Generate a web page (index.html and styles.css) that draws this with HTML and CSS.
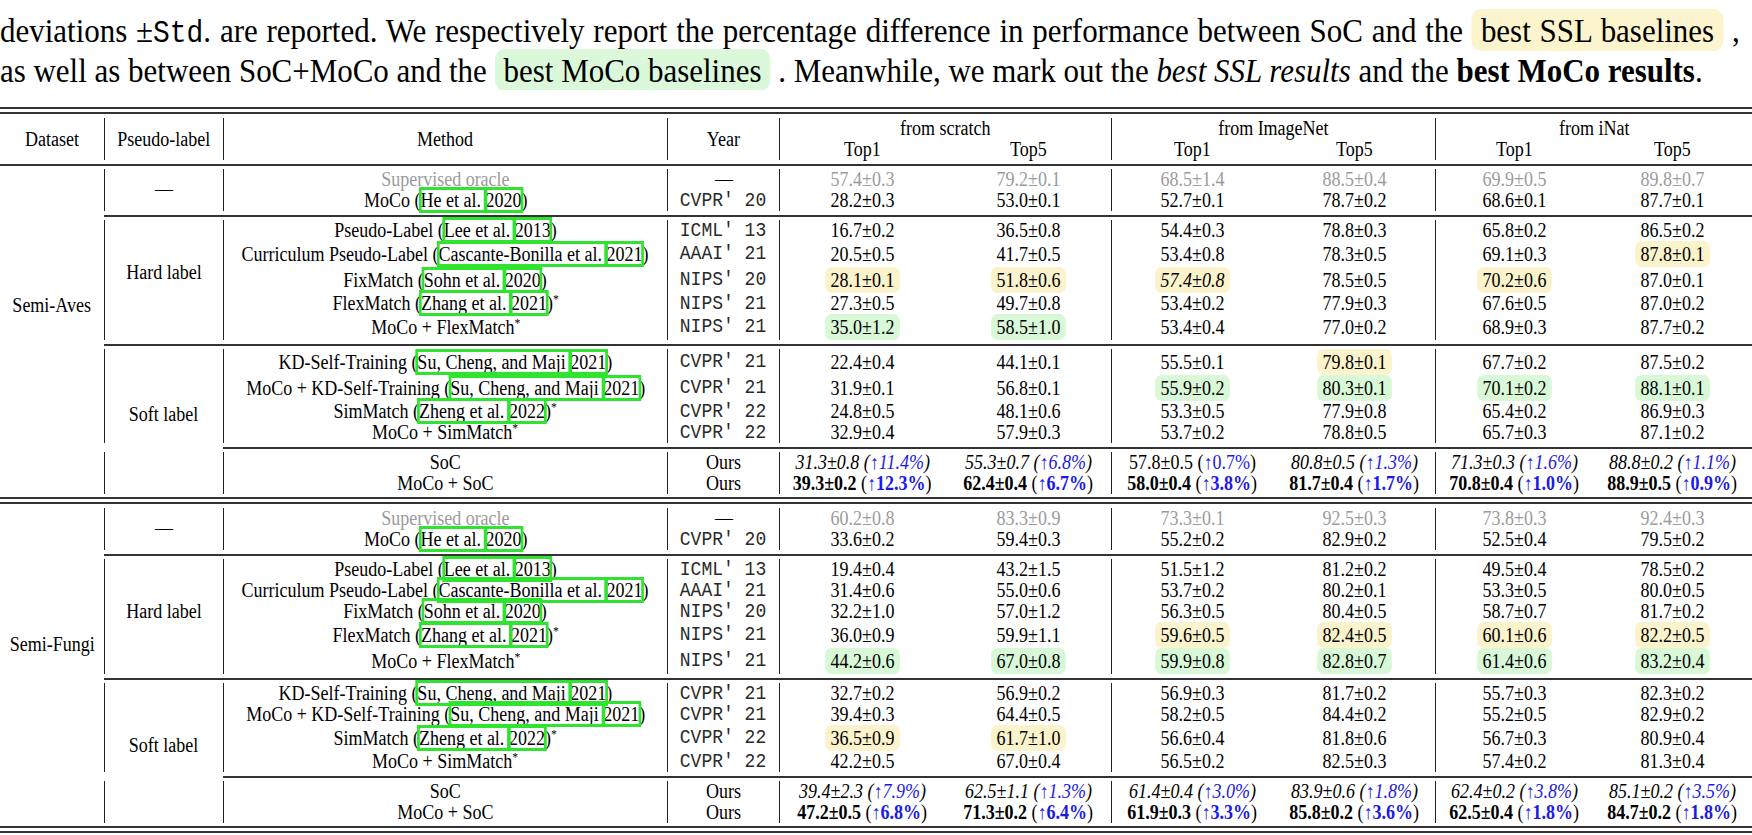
FILE: index.html
```html
<!DOCTYPE html>
<html>
<head>
<meta charset="utf-8">
<link rel="stylesheet" href="styles.css">
</head>
<body>
<div class="capwrap">
<div class="cap">
  <div class="cl j">deviations ±<span class="tt">Std</span>. are reported. We respectively report the percentage difference in performance between SoC and the <span class="cy">best SSL baselines</span> ,</div>
  <div class="cl">as well as between SoC+MoCo and the <span class="cg">best MoCo baselines</span> . Meanwhile, we mark out the <i>best SSL results</i> and the <b>best MoCo results</b>.</div>
</div>
</div>

<div class="tbl">
  <div class="drule top"></div>

  <div class="g head">
    <div class="h2 c1"><span class="t">Dataset</span></div>
    <div class="h2 c2 bl"><span class="t">Pseudo-label</span></div>
    <div class="h2 c3 bl"><span class="t">Method</span></div>
    <div class="h2 c4 bl"><span class="t">Year</span></div>
    <div class="c56 bl"><span class="t">from scratch</span></div>
    <div class="c78 bl"><span class="t">from ImageNet</span></div>
    <div class="c910 bl"><span class="t">from iNat</span></div>
    <div class="bl"><span class="t">Top1</span></div><div><span class="t">Top5</span></div>
    <div class="bl"><span class="t">Top1</span></div><div><span class="t">Top5</span></div>
    <div class="bl"><span class="t">Top1</span></div><div><span class="t">Top5</span></div>
  </div>

  <div class="hr full"></div>

  <!-- Semi-Aves -->
  <div class="g sec">
    <div class="ds"><span class="t">Semi-Aves</span></div>
    <div class="pl r-or"><span class="t">—</span></div>
    <div class="hr r1"></div>
    <div class="pl r-hard"><span class="t">Hard label</span></div>
    <div class="hr r2"></div>
    <div class="pl r-soft soft-a"><span class="t">Soft label</span></div>
    <div class="gap r3"></div>
    <div class="hr hr-m r3"></div>
    <div class="pl r-soc"></div>

    <div class="row">
      <div class="m gray"><span class="t">Supervised oracle</span></div><div class="y"><span class="t">—</span></div>
      <div class="bl gray"><span class="t">57.4±0.3</span></div><div class="gray"><span class="t">79.2±0.1</span></div>
      <div class="bl gray"><span class="t">68.5±1.4</span></div><div class="gray"><span class="t">88.5±0.4</span></div>
      <div class="bl gray"><span class="t">69.9±0.5</span></div><div class="gray"><span class="t">89.8±0.7</span></div>
    </div>
    <div class="row">
      <div class="m"><span class="t">MoCo (<span class="ct">He et al. </span><span class="ct">2020</span>)</span></div><div class="y"><span class="t yr">CVPR′ 20</span></div>
      <div class="bl"><span class="t">28.2±0.3</span></div><div><span class="t">53.0±0.1</span></div>
      <div class="bl"><span class="t">52.7±0.1</span></div><div><span class="t">78.7±0.2</span></div>
      <div class="bl"><span class="t">68.6±0.1</span></div><div><span class="t">87.7±0.1</span></div>
    </div>

    <div class="row">
      <div class="m"><span class="t">Pseudo-Label (<span class="ct">Lee et al. </span><span class="ct">2013</span>)</span></div><div class="y"><span class="t yr">ICML′ 13</span></div>
      <div class="bl"><span class="t">16.7±0.2</span></div><div><span class="t">36.5±0.8</span></div>
      <div class="bl"><span class="t">54.4±0.3</span></div><div><span class="t">78.8±0.3</span></div>
      <div class="bl"><span class="t">65.8±0.2</span></div><div><span class="t">86.5±0.2</span></div>
    </div>
    <div class="row tall">
      <div class="m"><span class="t">Curriculum Pseudo-Label (<span class="ct">Cascante-Bonilla et al. </span><span class="ct">2021</span>)</span></div><div class="y"><span class="t yr">AAAI′ 21</span></div>
      <div class="bl"><span class="t">20.5±0.5</span></div><div><span class="t">41.7±0.5</span></div>
      <div class="bl"><span class="t">53.4±0.8</span></div><div><span class="t">78.3±0.5</span></div>
      <div class="bl"><span class="t">69.1±0.3</span></div><div><span class="t"><span class="hy">87.8±0.1</span></span></div>
    </div>
    <div class="row tall">
      <div class="m"><span class="t">FixMatch (<span class="ct">Sohn et al. </span><span class="ct">2020</span>)</span></div><div class="y"><span class="t yr">NIPS′ 20</span></div>
      <div class="bl"><span class="t"><span class="hy">28.1±0.1</span></span></div><div><span class="t"><span class="hy">51.8±0.6</span></span></div>
      <div class="bl"><span class="t"><span class="hy"><i>57.4±0.8</i></span></span></div><div><span class="t">78.5±0.5</span></div>
      <div class="bl"><span class="t"><span class="hy">70.2±0.6</span></span></div><div><span class="t">87.0±0.1</span></div>
    </div>
    <div class="row">
      <div class="m"><span class="t">FlexMatch (<span class="ct">Zhang et al. </span><span class="ct">2021</span>)<sup>*</sup></span></div><div class="y"><span class="t yr">NIPS′ 21</span></div>
      <div class="bl"><span class="t">27.3±0.5</span></div><div><span class="t">49.7±0.8</span></div>
      <div class="bl"><span class="t">53.4±0.2</span></div><div><span class="t">77.9±0.3</span></div>
      <div class="bl"><span class="t">67.6±0.5</span></div><div><span class="t">87.0±0.2</span></div>
    </div>
    <div class="row tall">
      <div class="m"><span class="t">MoCo + FlexMatch<sup>*</sup></span></div><div class="y"><span class="t yr">NIPS′ 21</span></div>
      <div class="bl"><span class="t"><span class="hg">35.0±1.2</span></span></div><div><span class="t"><span class="hg">58.5±1.0</span></span></div>
      <div class="bl"><span class="t">53.4±0.4</span></div><div><span class="t">77.0±0.2</span></div>
      <div class="bl"><span class="t">68.9±0.3</span></div><div><span class="t">87.7±0.2</span></div>
    </div>

    <div class="row tall">
      <div class="m"><span class="t">KD-Self-Training (<span class="ct">Su, Cheng, and Maji </span><span class="ct">2021</span>)</span></div><div class="y"><span class="t yr">CVPR′ 21</span></div>
      <div class="bl"><span class="t">22.4±0.4</span></div><div><span class="t">44.1±0.1</span></div>
      <div class="bl"><span class="t">55.5±0.1</span></div><div><span class="t"><span class="hy">79.8±0.1</span></span></div>
      <div class="bl"><span class="t">67.7±0.2</span></div><div><span class="t">87.5±0.2</span></div>
    </div>
    <div class="row tall">
      <div class="m"><span class="t">MoCo + KD-Self-Training (<span class="ct">Su, Cheng, and Maji </span><span class="ct">2021</span>)</span></div><div class="y"><span class="t yr">CVPR′ 21</span></div>
      <div class="bl"><span class="t">31.9±0.1</span></div><div><span class="t">56.8±0.1</span></div>
      <div class="bl"><span class="t"><span class="hg">55.9±0.2</span></span></div><div><span class="t"><span class="hg">80.3±0.1</span></span></div>
      <div class="bl"><span class="t"><span class="hg">70.1±0.2</span></span></div><div><span class="t"><span class="hg">88.1±0.1</span></span></div>
    </div>
    <div class="row">
      <div class="m"><span class="t">SimMatch (<span class="ct">Zheng et al. </span><span class="ct">2022</span>)<sup>*</sup></span></div><div class="y"><span class="t yr">CVPR′ 22</span></div>
      <div class="bl"><span class="t">24.8±0.5</span></div><div><span class="t">48.1±0.6</span></div>
      <div class="bl"><span class="t">53.3±0.5</span></div><div><span class="t">77.9±0.8</span></div>
      <div class="bl"><span class="t">65.4±0.2</span></div><div><span class="t">86.9±0.3</span></div>
    </div>
    <div class="row">
      <div class="m"><span class="t">MoCo + SimMatch<sup>*</sup></span></div><div class="y"><span class="t yr">CVPR′ 22</span></div>
      <div class="bl"><span class="t">32.9±0.4</span></div><div><span class="t">57.9±0.3</span></div>
      <div class="bl"><span class="t">53.7±0.2</span></div><div><span class="t">78.8±0.5</span></div>
      <div class="bl"><span class="t">65.7±0.3</span></div><div><span class="t">87.1±0.2</span></div>
    </div>

    <div class="row">
      <div class="m"><span class="t">SoC</span></div><div class="y"><span class="t">Ours</span></div>
      <div class="bl"><span class="t"><i>31.3±0.8 (<span class="bu">↑11.4%</span>)</i></span></div>
      <div><span class="t"><i>55.3±0.7 (<span class="bu">↑6.8%</span>)</i></span></div>
      <div class="bl"><span class="t">57.8±0.5 (<span class="bu">↑0.7%</span>)</span></div>
      <div><span class="t"><i>80.8±0.5 (<span class="bu">↑1.3%</span>)</i></span></div>
      <div class="bl"><span class="t"><i>71.3±0.3 (<span class="bu">↑1.6%</span>)</i></span></div>
      <div><span class="t"><i>88.8±0.2 (<span class="bu">↑1.1%</span>)</i></span></div>
    </div>
    <div class="row">
      <div class="m"><span class="t">MoCo + SoC</span></div><div class="y"><span class="t">Ours</span></div>
      <div class="bl"><span class="t"><b>39.3±0.2</b> (<span class="bu">↑<b>12.3%</b></span>)</span></div>
      <div><span class="t"><b>62.4±0.4</b> (<span class="bu">↑<b>6.7%</b></span>)</span></div>
      <div class="bl"><span class="t"><b>58.0±0.4</b> (<span class="bu">↑<b>3.8%</b></span>)</span></div>
      <div><span class="t"><b>81.7±0.4</b> (<span class="bu">↑<b>1.7%</b></span>)</span></div>
      <div class="bl"><span class="t"><b>70.8±0.4</b> (<span class="bu">↑<b>1.0%</b></span>)</span></div>
      <div><span class="t"><b>88.9±0.5</b> (<span class="bu">↑<b>0.9%</b></span>)</span></div>
    </div>
  </div>

  <div class="drule mid"></div>

  <!-- Semi-Fungi -->
  <div class="g sec">
    <div class="ds"><span class="t">Semi-Fungi</span></div>
    <div class="pl r-or"><span class="t">—</span></div>
    <div class="hr r1"></div>
    <div class="pl r-hard"><span class="t">Hard label</span></div>
    <div class="hr r2"></div>
    <div class="pl r-soft soft-f"><span class="t">Soft label</span></div>
    <div class="gap r3"></div>
    <div class="hr hr-m r3"></div>
    <div class="pl r-soc"></div>

    <div class="row">
      <div class="m gray"><span class="t">Supervised oracle</span></div><div class="y"><span class="t">—</span></div>
      <div class="bl gray"><span class="t">60.2±0.8</span></div><div class="gray"><span class="t">83.3±0.9</span></div>
      <div class="bl gray"><span class="t">73.3±0.1</span></div><div class="gray"><span class="t">92.5±0.3</span></div>
      <div class="bl gray"><span class="t">73.8±0.3</span></div><div class="gray"><span class="t">92.4±0.3</span></div>
    </div>
    <div class="row">
      <div class="m"><span class="t">MoCo (<span class="ct">He et al. </span><span class="ct">2020</span>)</span></div><div class="y"><span class="t yr">CVPR′ 20</span></div>
      <div class="bl"><span class="t">33.6±0.2</span></div><div><span class="t">59.4±0.3</span></div>
      <div class="bl"><span class="t">55.2±0.2</span></div><div><span class="t">82.9±0.2</span></div>
      <div class="bl"><span class="t">52.5±0.4</span></div><div><span class="t">79.5±0.2</span></div>
    </div>

    <div class="row">
      <div class="m"><span class="t">Pseudo-Label (<span class="ct">Lee et al. </span><span class="ct">2013</span>)</span></div><div class="y"><span class="t yr">ICML′ 13</span></div>
      <div class="bl"><span class="t">19.4±0.4</span></div><div><span class="t">43.2±1.5</span></div>
      <div class="bl"><span class="t">51.5±1.2</span></div><div><span class="t">81.2±0.2</span></div>
      <div class="bl"><span class="t">49.5±0.4</span></div><div><span class="t">78.5±0.2</span></div>
    </div>
    <div class="row">
      <div class="m"><span class="t">Curriculum Pseudo-Label (<span class="ct">Cascante-Bonilla et al. </span><span class="ct">2021</span>)</span></div><div class="y"><span class="t yr">AAAI′ 21</span></div>
      <div class="bl"><span class="t">31.4±0.6</span></div><div><span class="t">55.0±0.6</span></div>
      <div class="bl"><span class="t">53.7±0.2</span></div><div><span class="t">80.2±0.1</span></div>
      <div class="bl"><span class="t">53.3±0.5</span></div><div><span class="t">80.0±0.5</span></div>
    </div>
    <div class="row">
      <div class="m"><span class="t">FixMatch (<span class="ct">Sohn et al. </span><span class="ct">2020</span>)</span></div><div class="y"><span class="t yr">NIPS′ 20</span></div>
      <div class="bl"><span class="t">32.2±1.0</span></div><div><span class="t">57.0±1.2</span></div>
      <div class="bl"><span class="t">56.3±0.5</span></div><div><span class="t">80.4±0.5</span></div>
      <div class="bl"><span class="t">58.7±0.7</span></div><div><span class="t">81.7±0.2</span></div>
    </div>
    <div class="row tall">
      <div class="m"><span class="t">FlexMatch (<span class="ct">Zhang et al. </span><span class="ct">2021</span>)<sup>*</sup></span></div><div class="y"><span class="t yr">NIPS′ 21</span></div>
      <div class="bl"><span class="t">36.0±0.9</span></div><div><span class="t">59.9±1.1</span></div>
      <div class="bl"><span class="t"><span class="hy">59.6±0.5</span></span></div><div><span class="t"><span class="hy">82.4±0.5</span></span></div>
      <div class="bl"><span class="t"><span class="hy">60.1±0.6</span></span></div><div><span class="t"><span class="hy">82.2±0.5</span></span></div>
    </div>
    <div class="row tall">
      <div class="m"><span class="t">MoCo + FlexMatch<sup>*</sup></span></div><div class="y"><span class="t yr">NIPS′ 21</span></div>
      <div class="bl"><span class="t"><span class="hg">44.2±0.6</span></span></div><div><span class="t"><span class="hg">67.0±0.8</span></span></div>
      <div class="bl"><span class="t"><span class="hg">59.9±0.8</span></span></div><div><span class="t"><span class="hg">82.8±0.7</span></span></div>
      <div class="bl"><span class="t"><span class="hg">61.4±0.6</span></span></div><div><span class="t"><span class="hg">83.2±0.4</span></span></div>
    </div>

    <div class="row">
      <div class="m"><span class="t">KD-Self-Training (<span class="ct">Su, Cheng, and Maji </span><span class="ct">2021</span>)</span></div><div class="y"><span class="t yr">CVPR′ 21</span></div>
      <div class="bl"><span class="t">32.7±0.2</span></div><div><span class="t">56.9±0.2</span></div>
      <div class="bl"><span class="t">56.9±0.3</span></div><div><span class="t">81.7±0.2</span></div>
      <div class="bl"><span class="t">55.7±0.3</span></div><div><span class="t">82.3±0.2</span></div>
    </div>
    <div class="row">
      <div class="m"><span class="t">MoCo + KD-Self-Training (<span class="ct">Su, Cheng, and Maji </span><span class="ct">2021</span>)</span></div><div class="y"><span class="t yr">CVPR′ 21</span></div>
      <div class="bl"><span class="t">39.4±0.3</span></div><div><span class="t">64.4±0.5</span></div>
      <div class="bl"><span class="t">58.2±0.5</span></div><div><span class="t">84.4±0.2</span></div>
      <div class="bl"><span class="t">55.2±0.5</span></div><div><span class="t">82.9±0.2</span></div>
    </div>
    <div class="row tall">
      <div class="m"><span class="t">SimMatch (<span class="ct">Zheng et al. </span><span class="ct">2022</span>)<sup>*</sup></span></div><div class="y"><span class="t yr">CVPR′ 22</span></div>
      <div class="bl"><span class="t"><span class="hy">36.5±0.9</span></span></div><div><span class="t"><span class="hy">61.7±1.0</span></span></div>
      <div class="bl"><span class="t">56.6±0.4</span></div><div><span class="t">81.8±0.6</span></div>
      <div class="bl"><span class="t">56.7±0.3</span></div><div><span class="t">80.9±0.4</span></div>
    </div>
    <div class="row">
      <div class="m"><span class="t">MoCo + SimMatch<sup>*</sup></span></div><div class="y"><span class="t yr">CVPR′ 22</span></div>
      <div class="bl"><span class="t">42.2±0.5</span></div><div><span class="t">67.0±0.4</span></div>
      <div class="bl"><span class="t">56.5±0.2</span></div><div><span class="t">82.5±0.3</span></div>
      <div class="bl"><span class="t">57.4±0.2</span></div><div><span class="t">81.3±0.4</span></div>
    </div>

    <div class="row">
      <div class="m"><span class="t">SoC</span></div><div class="y"><span class="t">Ours</span></div>
      <div class="bl"><span class="t"><i>39.4±2.3 (<span class="bu">↑7.9%</span>)</i></span></div>
      <div><span class="t"><i>62.5±1.1 (<span class="bu">↑1.3%</span>)</i></span></div>
      <div class="bl"><span class="t"><i>61.4±0.4 (<span class="bu">↑3.0%</span>)</i></span></div>
      <div><span class="t"><i>83.9±0.6 (<span class="bu">↑1.8%</span>)</i></span></div>
      <div class="bl"><span class="t"><i>62.4±0.2 (<span class="bu">↑3.8%</span>)</i></span></div>
      <div><span class="t"><i>85.1±0.2 (<span class="bu">↑3.5%</span>)</i></span></div>
    </div>
    <div class="row">
      <div class="m"><span class="t">MoCo + SoC</span></div><div class="y"><span class="t">Ours</span></div>
      <div class="bl"><span class="t"><b>47.2±0.5</b> (<span class="bu">↑<b>6.8%</b></span>)</span></div>
      <div><span class="t"><b>71.3±0.2</b> (<span class="bu">↑<b>6.4%</b></span>)</span></div>
      <div class="bl"><span class="t"><b>61.9±0.3</b> (<span class="bu">↑<b>3.3%</b></span>)</span></div>
      <div><span class="t"><b>85.8±0.2</b> (<span class="bu">↑<b>3.6%</b></span>)</span></div>
      <div class="bl"><span class="t"><b>62.5±0.4</b> (<span class="bu">↑<b>1.8%</b></span>)</span></div>
      <div><span class="t"><b>84.7±0.2</b> (<span class="bu">↑<b>1.8%</b></span>)</span></div>
    </div>
  </div>

  <div class="drule bot"></div>
</div>
</body>
</html>
```

FILE: styles.css
```css
* { box-sizing: border-box; }
html, body { margin: 0; padding: 0; background: #fff; }
body {
  width: 1752px;
  height: 835px;
  overflow: hidden;
  font-family: "Liberation Serif", "Times New Roman", serif;
  color: #000;
}

/* caption: the source is set in a slightly condensed Times, so the
   block is drawn at full height and narrowed horizontally */
.capwrap { width: 1752px; overflow: hidden; }
.cap {
  width: 1947px;
  padding-top: 10px;
  font-size: 34.4px;
  line-height: 40px;
  transform: scaleX(0.9);
  transform-origin: 0 0;
}
.cl { white-space: nowrap; height: 40px; }
.cl.j { white-space: normal; width: 1933px; text-align: justify; text-align-last: justify; }
.cap .tt { font-family: "Liberation Mono", monospace; font-size: 31px; line-height: 1; }
.cy, .cg { padding: 2px 10px; border-radius: 11px; }
.cy { background: #fcf4cd; }
.cg { background: #dbf8da; }

/* table */
.tbl { width: 1752px; overflow: hidden; }
.drule { height: 7px; border-top: 2px solid #333; border-bottom: 2px solid #333; }
.drule.top { margin-top: 17px; margin-bottom: 4px; }
.drule.mid { margin-top: 3px; margin-bottom: 4px; }
.drule.bot { margin-top: 3px; }

.g {
  display: grid;
  grid-template-columns: 104px 119px 444px 112px 166px 166px 162px 162px 158px 159px;
}
.g > div, .row > div {
  display: flex;
  justify-content: center;
  align-items: flex-start;
  font-size: 20px;
  line-height: 21px;
  white-space: nowrap;
}
.g > .row { display: contents; }
.row.tall > div { line-height: 26px; }

/* condensed text run */
.t {
  display: inline-block;
  white-space: nowrap;
  transform: scaleX(0.9);
}

.bl, .pl, .m, .y { border-left: 1px solid #222; }

.hr {
  height: 9px;
  background: linear-gradient(#333, #333) no-repeat 0 4px / 100% 2px;
}
.sec .hr { grid-column: 2 / -1; }
.sec .hr.hr-m { grid-column: 3 / -1; }
.gap { grid-column: 2; }
.r1 { grid-row: 3; }
.r2 { grid-row: 9; }
.r3 { grid-row: 14; }

.ds { grid-column: 1; grid-row: 1 / 17; padding-top: 126px; }
.pl { grid-column: 2; }
.r-or { grid-row: 1 / 3; padding-top: 10px; }
.r-hard { grid-row: 4 / 9; padding-top: 42px; }
.r-soft { grid-row: 10 / 14; }
.soft-a { padding-top: 55px; }
.soft-f { padding-top: 52px; }
.r-soc { grid-row: 15 / 17; }

/* header */
.head .h2 { grid-row: 1 / 3; line-height: 42px; }
.c1 { grid-column: 1; }
.c2 { grid-column: 2; }
.c3 { grid-column: 3; }
.c4 { grid-column: 4; }
.c56 { grid-column: 5 / 7; grid-row: 1; }
.c78 { grid-column: 7 / 9; grid-row: 1; }
.c910 { grid-column: 9 / 11; grid-row: 1; }

/* content */
.gray { color: #9b9b9b; }
.yr { font-family: "Liberation Mono", monospace; font-size: 20px; color: #2a2a2a; }
.ct { outline: 3px solid #2fe42f; outline-offset: -1px; }
sup { font-size: 13px; line-height: 0; vertical-align: 7px; }
.bu { color: #1a1ae6; line-height: 1; }
.hy, .hg {
  display: inline-block;
  line-height: 20px;
  padding: 3px 6px;
  border-radius: 7px;
}
.hy { background: #fbf3cc; }
.hg { background: #d9f8d8; }
```
